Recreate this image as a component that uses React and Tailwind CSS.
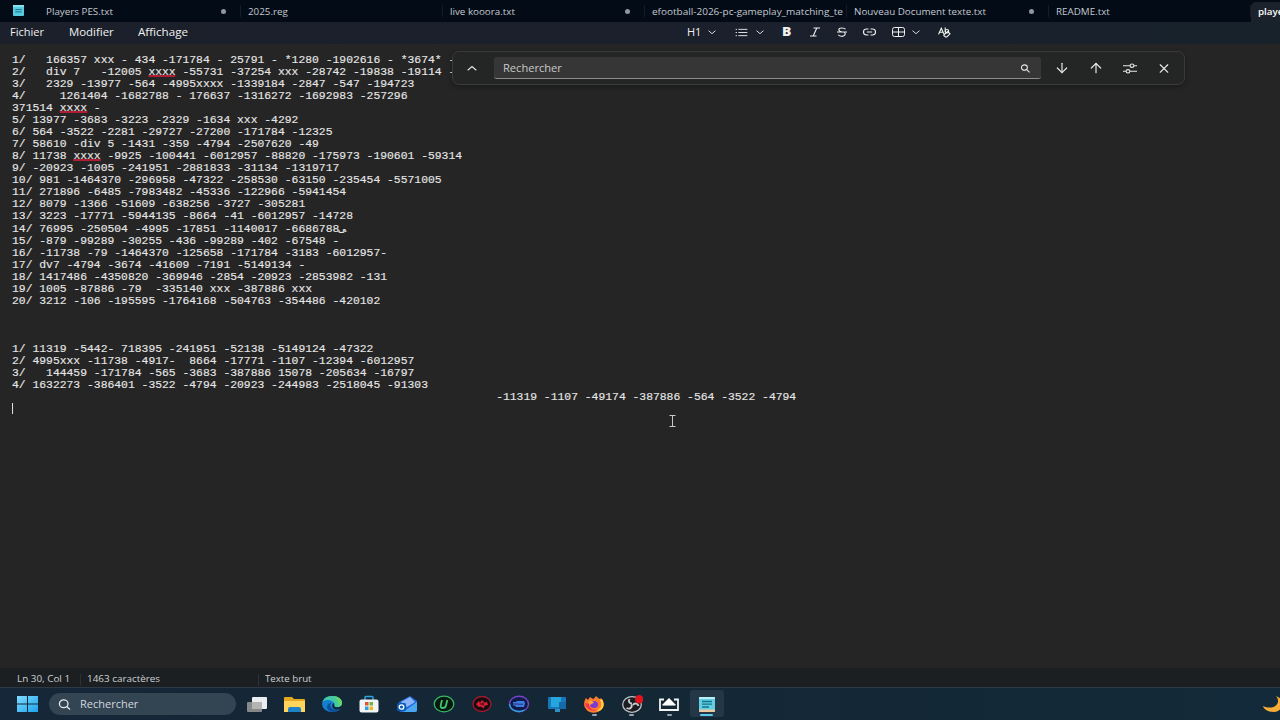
import { LuArrowDown, LuArrowUp, LuX } from 'react-icons/lu';

const TABS = [
  { name: 'Players PES.txt', dirty: true },
  { name: '2025.reg' },
  { name: 'live kooora.txt', dirty: true },
  { name: 'efootball-2026-pc-gameplay_matching_team', clipped: true },
  { name: 'Nouveau Document texte.txt', dirty: true },
  { name: 'README.txt' },
];

// ~word~ marks a misspelled word
const LINES = [
  '1/   166357 xxx - 434 -171784 - 25791 - *1280 -1902616 - *3674* -',
  '2/   div 7   -12005 ~xxxx~ -55731 -37254 xxx -28742 -19838 -19114 -',
  '3/   2329 -13977 -564 -4995xxxx -1339184 -2847 -547 -194723',
  '4/     1261404 -1682788 - 176637 -1316272 -1692983 -257296',
  '371514 ~xxxx~ -',
  '5/ 13977 -3683 -3223 -2329 -1634 xxx -4292',
  '6/ 564 -3522 -2281 -29727 -27200 -171784 -12325',
  '7/ 58610 -div 5 -1431 -359 -4794 -2507620 -49',
  '8/ 11738 ~xxxx~ -9925 -100441 -6012957 -88820 -175973 -190601 -59314',
  '9/ -20923 -1005 -241951 -2881833 -31134 -1319717',
  '10/ 981 -1464370 -296958 -47322 -258530 -63150 -235454 -5571005',
  '11/ 271896 -6485 -7983482 -45336 -122966 -5941454',
  '12/ 8079 -1366 -51609 -638256 -3727 -305281',
  '13/ 3223 -17771 -5944135 -8664 -41 -6012957 -14728',
  '14/ 76995 -250504 -4995 -17851 -1140017 -6686788\u200Dى',
  '15/ -879 -99289 -30255 -436 -99289 -402 -67548 -',
  '16/ -11738 -79 -1464370 -125658 -171784 -3183 -6012957-',
  '17/ dv7 -4794 -3674 -41609 -7191 -5149134 -',
  '18/ 1417486 -4350820 -369946 -2854 -20923 -2853982 -131',
  '19/ 1005 -87886 -79  -335140 xxx -387886 xxx',
  '20/ 3212 -106 -195595 -1764168 -504763 -354486 -420102',
  '',
  '',
  '',
  '1/ 11319 -5442- 718395 -241951 -52138 -5149124 -47322',
  '2/ 4995xxx -11738 -4917-  8664 -17771 -1107 -12394 -6012957',
  '3/   144459 -171784 -565 -3683 -387886 15078 -205634 -16797',
  '4/ 1632273 -386401 -3522 -4794 -20923 -244983 -2518045 -91303',
  '                                                                       -11319 -1107 -49174 -387886 -564 -3522 -4794',
];

function Line({ text }) {
  const tall = text.startsWith('14/');
  return (
    <div className={tall ? 'h-[12.5px] pt-[0.5px]' : 'h-3'}>
      {text.split('~').map((part, i) =>
        i % 2 ? <span key={i} className="border-b-2 border-[#b01c34] inline-block h-[11px] leading-[12px]">{part}</span> : part
      )}
    </div>
  );
}

function Chevron({ up }) {
  return (
    <svg viewBox="0 0 10 6" className={up ? 'w-[10px] h-[6px]' : 'w-2 h-[5px]'} fill="none" stroke="currentColor" strokeWidth="1.1" strokeLinecap="round">
      <path d={up ? 'M1 5L5 1.5L9 5' : 'M1 1L5 4.5L9 1'} />
    </svg>
  );
}

function TabBar() {
  return (
    <div className="flex h-[22px] bg-[#020b16] text-[#c3c9cf]">
      <div className="w-[37px] flex items-center pl-[13px] pb-px">
        <svg viewBox="0 0 12 12" className="w-[11px] h-[11px]">
          <rect width="12" height="12" rx="1" fill="#57cbe0" />
          <rect width="12" height="2" fill="#8be4f0" />
          <path d="M2.5 5h7M2.5 7.5h7" stroke="#176b83" />
        </svg>
      </div>
      {TABS.map((tab) => (
        <div key={tab.name} className="w-[202px] h-[22px] flex items-center shrink-0 pl-[9px]">
          <div className={tab.clipped ? 'w-[191px] h-[14px] overflow-hidden shrink-0' : 'w-[177px] h-[14px] shrink-0'}>
            <span className={`block w-max origin-left whitespace-nowrap text-[9px] font-medium leading-[15px] ${tab.clipped ? 'scale-x-[1.11]' : 'scale-x-[1.09]'}`}>{tab.name}</span>
          </div>
          {tab.dirty && <span className="w-[5px] h-[5px] -ml-[2px] rounded-full bg-[#8f979f]" />}
          <span className="ml-auto -mr-[2px] w-px h-3 bg-[#131d28]" />
        </div>
      ))}
      <div className="mt-[2px] ml-[2px] flex-1 overflow-hidden rounded-tl-[5px] bg-[#1b222b] pl-[7px] text-white font-semibold whitespace-nowrap">
        <span className="block w-max origin-left scale-x-[1.09] text-[9px] leading-[19px]">players</span>
      </div>
    </div>
  );
}

function MenuBar() {
  return (
    <div className="flex h-[22px] items-center pb-[2px] bg-[linear-gradient(90deg,#1b202b,#1a202c_60%,#17222b)] text-[#f0f0f0]">
      <div className="w-[687px] flex pl-[10px] text-[10px] font-medium leading-[20px]">
        <span className="w-[59px]"><span className="inline-block origin-left scale-x-[1.1]">Fichier</span></span>
        <span className="w-[69px]"><span className="inline-block origin-left scale-x-[1.14]">Modifier</span></span>
        <span className="inline-block origin-left scale-x-[1.16]">Affichage</span>
      </div>
      <div className="flex items-center">
        <span className="w-[21px] text-[10px] font-medium"><span className="inline-block origin-left scale-x-110">H1</span></span>
        <span className="w-[27px]"><Chevron /></span>
        <svg viewBox="0 0 13 10" className="w-[13px] h-[9px]" stroke="currentColor" strokeWidth="1">
          <path d="M3 1.5h10M3 5h10M3 8.5h10M0 1.5h1.5M0 5h1.5M0 8.5h1.5" />
        </svg>
        <span className="w-[34px] pl-2"><Chevron /></span>
        <span className="w-[27px] text-[12px] leading-[18px] font-extrabold"><span className="inline-block origin-left scale-x-[1.15]">B</span></span>
        <svg viewBox="0 0 12 10" className="w-[12px] h-[10px] mr-[15px]" fill="none" stroke="currentColor" strokeWidth="1.1">
          <path d="M4.5 1h6.5M1 9h6.5M7.8 1L4.2 9" />
        </svg>
        <svg viewBox="0 0 12 10" className="w-[12px] h-[10px] mr-[15px]" fill="none" stroke="currentColor" strokeWidth="1.1">
          <path d="M9.500 2.300C8.500 .6 3 .2 2.800 2.700 2.700 4 4 4.500 6 5M1 5h10M8.500 5.500C10.500 8 7.500 9.500 5.500 9.300 4 9.200 3 8.700 2.300 7.700" />
        </svg>
        <svg viewBox="0 0 13 8" className="w-[13px] h-[8px] mr-[16px]" fill="none" stroke="currentColor" strokeWidth="1.1">
          <path d="M5.500 1H3.500a2.800 2.800 0 0 0 0 6h2M7.500 1h2a2.800 2.800 0 0 1 0 6h-2M3.800 4h5.400" />
        </svg>
        <svg viewBox="0 0 13 10" className="w-[13px] h-[10px] mr-[7px]" fill="none" stroke="currentColor">
          <rect x=".5" y=".5" width="12" height="9" rx="2" />
          <path d="M6.500 .5v9M.5 5h12" />
        </svg>
        <span className="w-[26px]"><Chevron /></span>
        <svg viewBox="0 0 13 11" className="w-[13px] h-[11px]" fill="none" stroke="currentColor" strokeWidth="1.1" strokeLinecap="round">
          <path d="M.7 7L3.300 1.200 5.900 7M1.600 5.200h3.400M7.200 .8v4.200" />
          <circle cx="9" cy="4.200" r="1.700" />
          <path d="M6.200 7.500L9.700 4.500 12 6.800 8.800 10H7.500L5.800 8.500z" />
        </svg>
      </div>
    </div>
  );
}

function FindBar() {
  return (
    <div className="absolute left-[452px] top-[51px] w-[733px] h-[34px] flex items-center rounded-[7px] border border-[#3a3a3a] bg-[#242525] text-[#e6e6e6] shadow-[0_2px_5px_rgba(0,0,0,0.3)]">
      <span className="w-[41px] pl-[14px] flex"><Chevron up /></span>
      <div className="w-[547px] h-[22px] flex items-center justify-between rounded-[3px] bg-[#363636] border-b border-[#8d8d8d] pl-[9px] pr-[10px]">
        <span className="inline-block origin-left scale-x-[1.11] pt-px text-[10px] font-medium text-[#c9c9c9]">Rechercher</span>
        <svg viewBox="0 0 11 10" className="mt-px w-[11px] h-[9px]" fill="none" stroke="currentColor" strokeWidth="1.2">
          <ellipse cx="4.300" cy="4" rx="3.300" ry="3" />
          <path d="M6.800 6.200L10 9.200" />
        </svg>
      </div>
      <LuArrowDown className="ml-[12px] w-[18px] h-[16px]" strokeWidth={1.8} />
      <LuArrowUp className="ml-[16px] w-[18px] h-[16px]" strokeWidth={1.8} />
      <svg viewBox="0 0 14 11" className="ml-[18px] w-[14px] h-[11px]" fill="none" stroke="currentColor" strokeWidth="1.1">
        <path d="M0 2.700h7M11 2.700h3M0 8.300h3M7 8.300h7" />
        <ellipse cx="9" cy="2.700" rx="1.900" ry="1.700" />
        <ellipse cx="5" cy="8.300" rx="1.900" ry="1.700" />
      </svg>
      <LuX className="ml-[19px] w-[16px] h-[15px]" strokeWidth={1.8} />
    </div>
  );
}

function StatusBar() {
  return (
    <div className="h-[20px] flex items-center border-b border-[#2e3b46] bg-[#1b1f21] pl-[17px] pt-[4px] text-[9.5px] font-medium text-[#cdd0d2]">
      <span className="w-[63px]"><span className="inline-block origin-left scale-x-[1.04] whitespace-nowrap">Ln 30, Col 1</span></span>
      <span className="w-px h-3 bg-[#2b3034] mr-[6px]" />
      <span className="w-[171px]"><span className="inline-block origin-left scale-x-[1.04] whitespace-nowrap">1463 caractères</span></span>
      <span className="w-px h-3 bg-[#2b3034] mr-[6px]" />
      <span className="inline-block origin-left scale-x-[1.02]">Texte brut</span>
    </div>
  );
}

const APPS = [
  {
    id: 'taskview',
    icon: (
      <>
        <rect x="6" y="2" width="15" height="12" rx="1" fill="#e9edef" />
        <rect x="1" y="7" width="15" height="10" rx="1" fill="#85898b" />
        <rect x="6" y="7" width="10" height="7" fill="#b4b4b2" />
      </>
    ),
  },
  {
    id: 'explorer',
    icon: (
      <>
        <path d="M1 3q0-1 1-1h7l2 2h10q1 0 1 1v12H1z" fill="#e5a821" />
        <path d="M1 6h21v11H1z" fill="#ffd45b" />
        <path d="M5 17v-3q0-2 2-2h9q2 0 2 2v3z" fill="#1c83c9" />
      </>
    ),
  },
  {
    id: 'edge',
    icon: (
      <>
        <ellipse cx="11" cy="9" rx="10" ry="8" fill="#137fce" />
        <path d="M1.500 7C3 2.500 7 1 11 1c6 0 10 3 10 7 0 3-3 4-6 4-2 0-2-1-1.500-2C14 6 6 3 1.500 7z" fill="#43c9a4" />
        <path d="M12 1c5 0 9 3 9 7 0 2-1.500 3.500-4 4 1-5-1-8-5-11z" fill="#62d66b" />
        <path d="M10 8c-2 3 0 7 6 7 2 0 3-.5 4-1-5 5-14 3-14-2 0-2 2-4 4-4z" fill="#0b4d96" />
        <path d="M12.500 8c2 1-1 4 3 4.200 2 0 4-.5 5.500-1.800V12l-2 2c-6 2-10-2-6.500-6z" fill="#132635" />
      </>
    ),
  },
  {
    id: 'store',
    icon: (
      <>
        <path d="M7 5V2.500q0-1 1-1h6q1 0 1 1V5" fill="none" stroke="#2fa5dd" strokeWidth="1.500" />
        <rect x="1.500" y="4.500" width="19" height="13" rx="2" fill="#f1f4f6" />
        <rect x="7" y="7" width="3.500" height="3.500" fill="#e4532d" />
        <rect x="11.500" y="7" width="3.500" height="3.500" fill="#6eb43f" />
        <rect x="7" y="11.500" width="3.500" height="3.500" fill="#2b9de0" />
        <rect x="11.500" y="11.500" width="3.500" height="3.500" fill="#f2b51d" />
      </>
    ),
  },
  {
    id: 'outlook',
    icon: (
      <>
        <path d="M3 7L14 1l7 5v9q0 2-2 2H5q-2 0-2-2z" fill="#2269cf" />
        <path d="M5 7l9-5 5 5-8 5z" fill="#8bb4ff" />
        <path d="M21 7v8q0 2-2 2H7z" fill="#4aa7f3" />
        <rect x="1" y="8" width="9" height="8" rx="1.500" fill="#0b5bb5" />
        <ellipse cx="5.500" cy="12" rx="2.300" ry="2.200" fill="none" stroke="#fff" strokeWidth="1.300" />
      </>
    ),
  },
  {
    id: 'iobit',
    icon: (
      <>
        <ellipse cx="11" cy="9" rx="9.800" ry="7.900" fill="#08170f" stroke="#37b765" strokeWidth="1.300" />
        <path d="M9 5L7.700 10.500q-.5 2.500 2 2.500 2.700 0 3.300-2.500L14.300 5" fill="none" stroke="#3fc46f" strokeWidth="1.800" />
      </>
    ),
  },
  {
    id: 'booster',
    icon: (
      <>
        <ellipse cx="11" cy="9" rx="9" ry="7.500" fill="#190b12" stroke="#a01a2d" strokeWidth="1.300" />
        <path d="M5 9l3-3 1 2 2-3 2.500 2.500L16 7l1 3-3 .5-1.500 3L10 11.500 7.500 12z" fill="#d81e35" />
        <path d="M9 9h4M12 7.500v3" stroke="#3c0b14" />
      </>
    ),
  },
  {
    id: 'driver',
    icon: (
      <>
        <ellipse cx="11" cy="9" rx="9.500" ry="7.700" fill="#101a49" stroke="#7544c9" strokeWidth="1.400" />
        <path d="M1.500 9a9.500 7.700 0 0 0 15 6" fill="none" stroke="#29a7dc" strokeWidth="1.400" />
        <path d="M5 7h3l1-1h7l1 2-1 4H8l-1-1.500H5z" fill="#3e7ce2" />
        <path d="M5 9h5M10 9.200h5" stroke="#141f5a" strokeWidth=".8" />
      </>
    ),
  },
  {
    id: 'remote',
    icon: (
      <>
        <rect x="2" y="2" width="18" height="12" rx="1" fill="#1976b8" />
        <rect x="5" y="2" width="10" height="10" fill="#25a6dd" />
        <path d="M9 14h5v3H9z" fill="#2c91c4" />
        <path d="M13 7h7v7h-7z" fill="#1569a7" />
      </>
    ),
  },
  {
    id: 'firefox',
    running: true,
    icon: (
      <>
        <path d="M3 3l2 2 2-3 3 2c2-1 2-2 3-3 1 2 2 3 4 3l1-1c3 4 4 8 1 11-4 5-13 5-16 0C0 11 1 6 3 3z" fill="#ff7b2c" />
        <path d="M13 1c1 2 4 3 5 6 1 5-1 8-6 9 7 2 11-6 7-12l-2 1c-1-1-2-3-4-4z" fill="#ffce3e" />
        <path d="M2 8c1 7 8 9 13 7-5 0-9-1-9-6z" fill="#ef3457" />
        <ellipse cx="11" cy="9.500" rx="4" ry="3.500" fill="#7b3bd0" />
        <path d="M5 6c3-1 5 0 6 2-2 0-2 1-4 2z" fill="#ffa436" />
      </>
    ),
  },
  {
    id: 'obs',
    running: true,
    icon: (
      <>
        <ellipse cx="11" cy="9.500" rx="9.300" ry="7.800" fill="#1c1d20" stroke="#bfc3c6" strokeWidth="1.300" />
        <path d="M8.500 4c-1.500 2.500 0 4.500 2.500 4.500M17.500 11c-.5-2.500-4-3.500-5.500-1M5.500 13c3 1.500 6 0 5-3.500" fill="none" stroke="#c6c9cb" strokeWidth="1.900" />
        <circle cx="18.200" cy="4.300" r="4.200" fill="#e4141c" />
      </>
    ),
  },
  {
    id: 'capture',
    running: true,
    icon: (
      <>
        <path d="M6 4.500H2v10.500h18V4.500h-4" fill="none" stroke="#f2f2f2" strokeWidth="1.800" />
        <path d="M11 3l6.500 6.500H4.500z" fill="#fff" />
        <path d="M4.500 9.800h13" stroke="#fff" strokeWidth="1.500" />
      </>
    ),
  },
  {
    id: 'notepad',
    active: true,
    icon: (
      <>
        <rect x="3" y="2" width="16" height="15" rx="1" fill="#61cfe2" />
        <path d="M3 3q0-1 1-1h14q1 0 1 1v1H3z" fill="#b9f0f7" />
        <path d="M6 6.500h10M6 9.200h10M6 12h7" stroke="#16758e" strokeWidth="1.300" />
        <path d="M3 14.500h16V16q0 1-1 1H4q-1 0-1-1z" fill="#e8c9a4" />
      </>
    ),
  },
];

function Taskbar() {
  return (
    <div className="flex-1 flex items-center overflow-hidden bg-[linear-gradient(90deg,#152738,#142735_50%,#132a3a)]">
      <svg viewBox="0 0 20 16" className="ml-[17px] mr-[11px] w-[21px] h-[16px]" preserveAspectRatio="none">
        <defs>
          <linearGradient id="win" x1="0" y1="0" x2="1" y2="1">
            <stop offset="0" stopColor="#7fdcff" />
            <stop offset="1" stopColor="#1ba3ec" />
          </linearGradient>
        </defs>
        <path d="M0 0h9.500v7.500H0zM10.500 0H20v7.500h-9.500zM0 8.500h9.500V16H0zM10.500 8.500H20V16h-9.500z" fill="url(#win)" />
      </svg>
      <div className="w-[187px] h-[22px] flex items-center rounded-full bg-[#334453] pl-[9px] text-[#d3d9de]">
        <svg viewBox="0 0 12 11" className="w-[13px] h-[11px] mr-[9px]" fill="none" stroke="#e6eaed" strokeWidth="1.300">
          <ellipse cx="5.200" cy="4.700" rx="4.300" ry="3.900" />
          <path d="M8.300 7.500L11.500 10.400" />
        </svg>
        <span className="inline-block origin-left scale-x-[1.1] text-[10px] font-medium">Rechercher</span>
      </div>
      <div className="ml-[2px] flex h-full items-center">
        {APPS.map((app) => (
          <div key={app.id} className="w-[37.5px] h-full flex items-center justify-center relative">
            {app.active && <span className="absolute inset-x-[2px] top-[2px] bottom-[3px] rounded-[3px] bg-[#233746]" />}
            <svg viewBox="0 0 22 18" className="relative w-[22px] h-[18px]">{app.icon}</svg>
            {app.running && <span className="absolute bottom-[4px] w-[5px] h-[2px] rounded-full bg-[#98a4ae]" />}
            {app.active && <span className="absolute bottom-[4px] w-[13px] h-[2px] rounded-full bg-[#5cc8ea]" />}
          </div>
        ))}
      </div>
      <svg viewBox="0 0 17 16" className="ml-auto w-[17px] h-[16px]">
        <path d="M13 0c6 7-2 15-13 10 1 4 6 6 11 6 4 0 6-2 8-5V4c-2-2-4-3-6-4z" fill="#f7ac38" />
      </svg>
    </div>
  );
}

export default function App() {
  return (
    <div className="relative w-[1280px] h-[720px] flex flex-col overflow-hidden bg-[#252525] font-['Open_Sans',sans-serif]">
      <TabBar />
      <MenuBar />
      <div className="h-[624px] pl-[12px] pt-[10.4px] text-[#e6e6e6]">
        <div className="origin-left scale-x-[1.033] whitespace-pre font-['Liberation_Mono',monospace] text-[11px] leading-[12px] w-[900px] [-webkit-text-stroke:0.15px_#e6e6e6]">
          {LINES.map((text, i) => <Line key={i} text={text} />)}
          <div className="w-px h-[11px] bg-[#dddddd]" />
        </div>
      </div>
      <StatusBar />
      <Taskbar />
      <FindBar />
      {/* mouse pointer */}
      <svg viewBox="0 0 7 12" className="absolute left-[668.5px] top-[415px] w-[7px] h-[12px]" fill="none" stroke="#c8c8c8">
        <path d="M.5.5h6M.5 11.500h6M3.500.5v11" />
      </svg>
    </div>
  );
}
